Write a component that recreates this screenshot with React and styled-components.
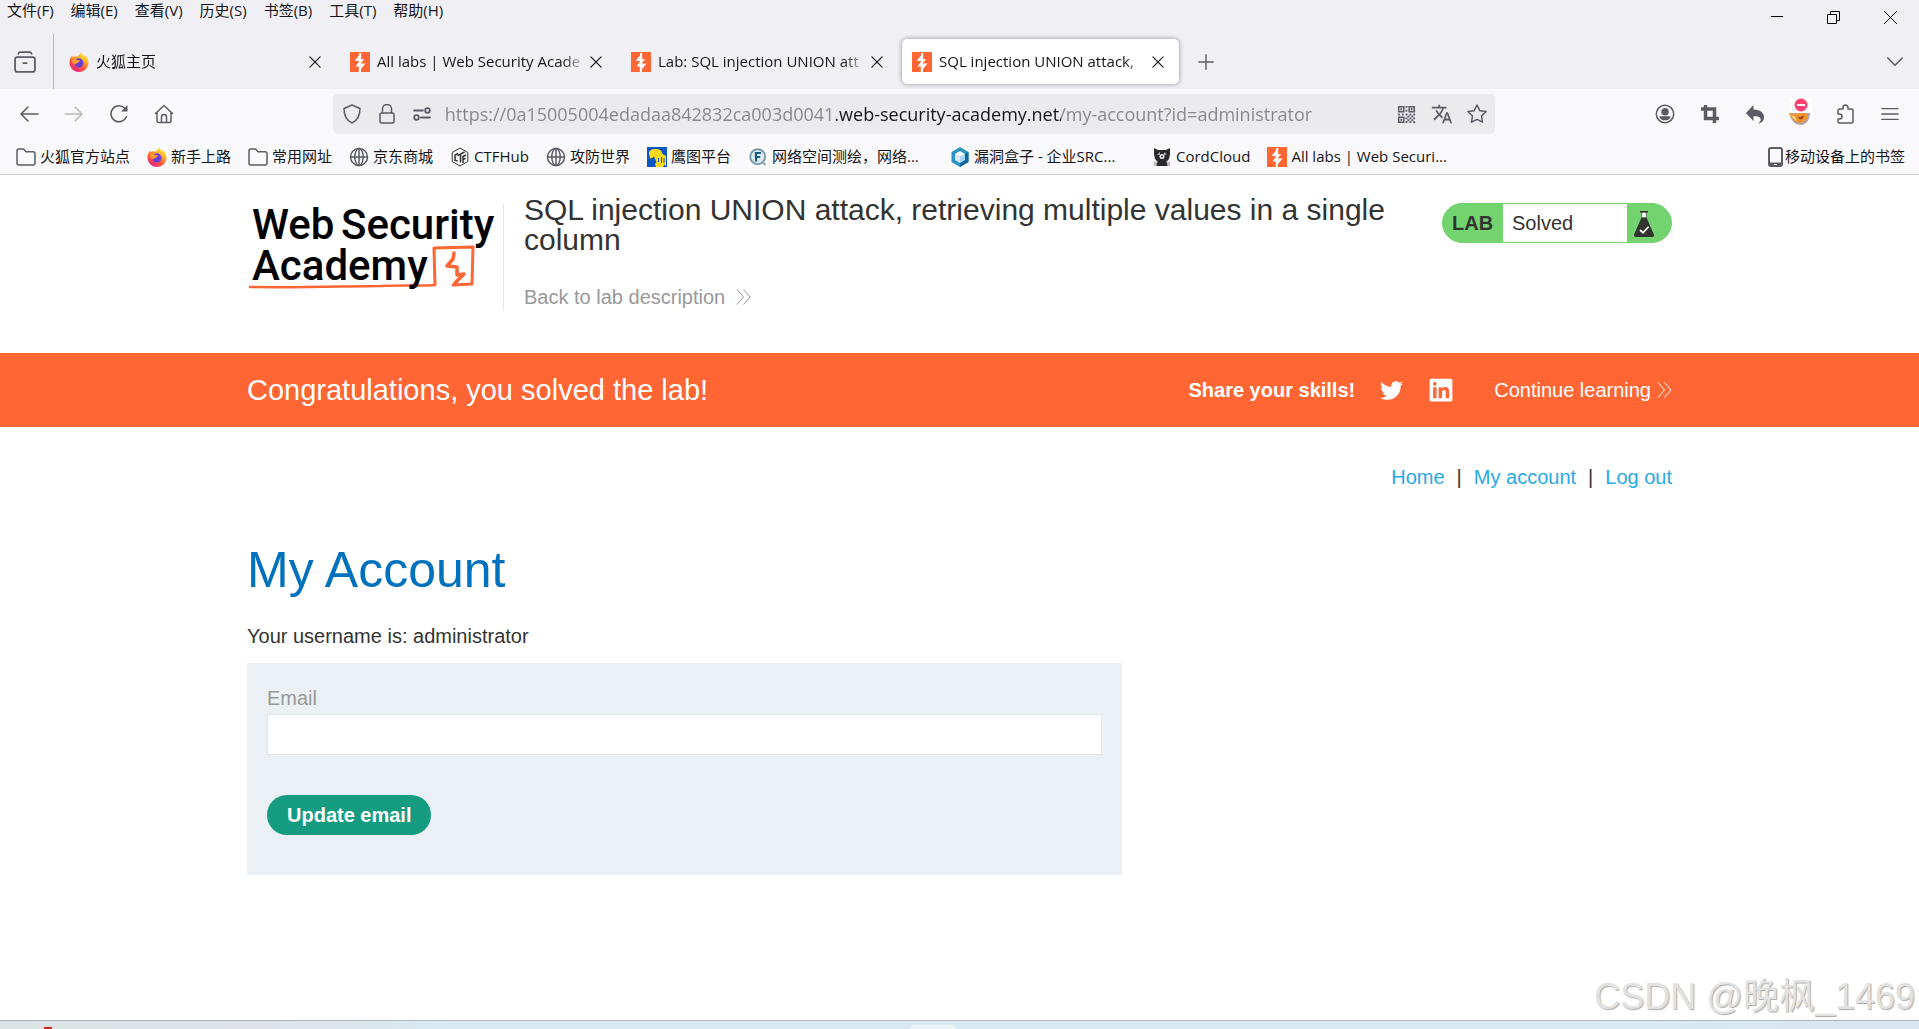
import React, { useState } from 'react'
import styled, { createGlobalStyle, css } from 'styled-components'
import { FaTwitter, FaLinkedin } from 'react-icons/fa'
import { MdTranslate } from 'react-icons/md'

const GlobalStyle = createGlobalStyle`
* {
    box-sizing: border-box;
}
body {
    margin: 0;
    background-color: #fff;
    font-family: 'Liberation Sans', Arial, sans-serif;
    font-size: 20px;
    line-height: 24px;
    color: #333332;
}
button {
    padding: 0;
    border: 0;
    background: none;
    font: inherit;
    color: inherit;
    cursor: pointer;
}
svg {
    display: block;
    flex: none;
}
`

const Screen = styled.div`
    display: flex;
    flex-direction: column;
    min-height: 100vh;
    position: relative;
`

/* browser window */

const Chrome = styled.header`
    font-family: 'Open Sans', 'Noto Sans CJK SC', sans-serif;
    font-size: 15px;
    line-height: 20px;
    color: #15141a;
    background-color: #f9f9fb;
    border-bottom: 1px solid #cccccd;
`

const TitleBar = styled.div`
    display: flex;
    justify-content: space-between;
    height: 34px;
    background-color: #f0f0f4;
`

const MenuBar = styled.nav`
    display: flex;
    align-items: flex-start;
    gap: 17px;
    padding-left: 7px;
`

const WindowControls = styled.div`
    display: flex;

    button {
        display: flex;
        align-items: center;
        justify-content: center;
        width: 57px;
    }
`

const TabStrip = styled.div`
    display: flex;
    align-items: center;
    height: 55px;
    background-color: #f0f0f4;
`

const FirefoxView = styled.button`
    display: flex;
    align-items: center;
    justify-content: center;
    width: 54px;
    height: 55px;
    padding-right: 3px;
    border-right: 1px solid #b8b8bf;
    margin-right: 5px;
`

const TabBox = styled.div`
    display: flex;
    align-items: center;
    width: 277px;
    height: 45px;
    padding: 0 12px 0 10px;
    margin-right: 4px;
    border-radius: 5px;
    ${({ $active }) =>
        $active &&
        css`
            background-color: #fff;
            box-shadow: 0 0 5px rgba(0, 0, 0, 0.4);
        `}
`

const TabTitle = styled.button`
    flex: 1;
    min-width: 0;
    padding-bottom: 2px;
    margin-left: 7px;
    overflow: hidden;
    white-space: nowrap;
    text-align: left;
    mask-image: linear-gradient(to left, transparent, #000 24px);
`

const TabClose = styled.button`
    display: flex;
    align-items: center;
    justify-content: center;
    width: 18px;
    height: 18px;
`

const IconButton = styled.button`
    display: flex;
    align-items: center;
    justify-content: center;
    width: ${({ $narrow }) => ($narrow ? 35 : 45)}px;
    height: 40px;
    color: #5b5b66;
    opacity: ${({ disabled }) => (disabled ? 0.4 : 1)};
`

const ListTabs = styled(IconButton)`
    margin-left: auto;
    margin-right: 2px;
`

const NavBar = styled.div`
    display: flex;
    align-items: center;
    height: 50px;
    padding: 0 7px 0 6px;
`

const Spring = styled.div`
    flex: 10;
`

const UrlBar = styled.div`
    display: flex;
    align-items: center;
    flex: 79;
    min-width: 0;
    height: 40px;
    padding: 0 1px 0 2px;
    border-radius: 5px;
    background-color: #ebebed;
`

/* only the registered domain is dark, the rest of the address is dimmed */
const UrlInput = styled.input`
    flex: 1;
    min-width: 0;
    height: 40px;
    padding: 0;
    margin-left: 5px;
    border: 0;
    outline: 0;
    font: inherit;
    font-size: 18px;
    -webkit-text-fill-color: transparent;
    background-image: linear-gradient(
        to right,
        #85858a 391px,
        #15141a 391px,
        #15141a 616px,
        #85858a 616px
    );
    background-clip: text;
    -webkit-background-clip: text;
`

const Bookmarks = styled.div`
    display: flex;
    align-items: center;
    gap: 17px;
    height: 35px;
    padding: 0 14px 0 16px;
`

const Bookmark = styled.a`
    display: flex;
    align-items: center;
    gap: ${({ $tight }) => ($tight ? 2 : 4)}px;
    margin-left: ${({ $last }) => ($last ? 'auto' : 0)};
    color: inherit;
    text-decoration: none;
    white-space: nowrap;

    svg {
        color: #5b5b66;
    }
    span {
        min-width: ${({ $long }) => ($long ? 161 : 0)}px;
        padding-bottom: 2px;
    }
`

/* lab page */

const Container = styled.div`
    width: calc(100% - 64px);
    max-width: 1425px;
    margin: 0 auto;
`

const LabHeader = styled(Container)`
    display: flex;
    align-items: flex-start;
    padding: 20px 0 42px;
`

const LogoLink = styled.a`
    width: 257px;
    height: 108px;
    margin-top: 8px;
    border-right: 1px solid #e4e4e4;
    flex: none;
`

const TitleBlock = styled.div`
    flex: 1;
    padding: 0 30px 0 20px;

    h2 {
        margin: 0 0 30px;
        font-size: 30px;
        font-weight: 400;
        line-height: 30px;
    }
`

const BackLink = styled.a`
    display: inline-flex;
    align-items: center;
    gap: 11px;
    color: #999;
    text-decoration: none;
`

const LabStatus = styled.div`
    display: flex;
    align-items: stretch;
    width: 230px;
    height: 40px;
    margin-top: 8px;
    border: 1px solid #72d36f;
    border-radius: 20px;
    background-color: #72d36f;
    overflow: hidden;
    line-height: 38px;

    strong {
        width: 60px;
        padding-left: 9px;
    }
    p {
        flex: 1;
        margin: 0;
        padding-left: 9px;
        background-color: #fff;
    }
    svg {
        margin: 7px 17px 0 7px;
    }
`

const Banner = styled.section`
    background-color: #ff6633;
    color: #fff;
`

const BannerRow = styled(Container)`
    display: flex;
    align-items: center;
    height: 74px;

    h4 {
        flex: 1;
        margin: 0;
        font-size: 29px;
        font-weight: 400;
        line-height: 32px;
    }
    a {
        display: flex;
        align-items: center;
        color: inherit;
        text-decoration: none;
    }
`

const Share = styled.div`
    display: flex;
    align-items: center;
    gap: 25px;
    margin-right: 40px;
`

const ContinueLink = styled.a`
    gap: 6px;
`

const Page = styled(Container)`
    flex: 1;
    padding-top: 38px;

    h1 {
        margin: 0 0 29px;
        font-size: 50px;
        font-weight: 400;
        line-height: 50px;
        color: #0071bd;
    }
    p {
        margin: 0 0 15px;
    }
`

const PageNav = styled.nav`
    display: flex;
    justify-content: flex-end;
    gap: 12px;
    margin-bottom: 56px;

    a {
        color: #29a9e5;
        text-decoration: none;
    }
`

const LoginForm = styled.form`
    display: flex;
    flex-direction: column;
    align-items: flex-start;
    max-width: 875px;
    padding: 23px 20px 40px;
    background-color: #eaf0f3;

    label {
        margin-bottom: 4px;
        color: #999;
    }
    input {
        width: 100%;
        height: 41px;
        padding: 0 10px;
        margin-bottom: 40px;
        border: 1px solid #e3e5ea;
        background-color: #fff;
        font: inherit;
        outline: 0;
    }
`

const SubmitButton = styled.button`
    height: 40px;
    padding: 0 20px;
    border-radius: 20px;
    background-color: #159b7f;
    color: #fff;
    font-weight: 700;
`

const Taskbar = styled.footer`
    display: flex;
    align-items: flex-end;
    height: 9px;
    border-top: 1px solid #abb5ba;
    background: linear-gradient(to right, #dce3e4, #dfe3e9 14%, #d7eaf2 24%, #d7eaf2 80%, #dae6f2);

    i {
        width: 8px;
        height: 2px;
        margin-left: 44px;
        background-color: #cf2a1c;
    }
    b {
        width: 46px;
        height: 4px;
        margin-left: 858px;
        border-radius: 4px 4px 0 0;
        background-color: #edf5f9;
    }
`

const Watermark = styled.div`
    position: absolute;
    right: 4px;
    bottom: 12px;
    font-family: 'Liberation Sans', 'Noto Sans CJK SC', sans-serif;
    font-size: 36px;
    line-height: 40px;
    color: #e2e2e2;
    text-shadow: 1px 1px 1px #aaa;
`

/* icons */

const Line = ({ size = 20, width = 1.5, children, ...rest }) => (
    <svg
        width={size}
        height={size}
        viewBox="0 0 20 20"
        fill="none"
        stroke="currentColor"
        strokeWidth={width}
        strokeLinecap="round"
        strokeLinejoin="round"
        aria-hidden="true"
        {...rest}
    >
        {children}
    </svg>
)

const Cross = ({ size = 12 }) => (
    <Line size={size} width={2}>
        <path d="M1.500 1.500l17 17M18.500 1.500l-17 17" />
    </Line>
)

const Bolt = () => (
    <svg width="20" height="20" viewBox="0 0 20 20" aria-hidden="true">
        <path fill="#ff6633" d="M0 0h20v20H0z" />
        <path fill="#fff" d="M9 1h2.200v6.200h3L10.800 11H9.500V9H4.500L9 3.500z" />
        <path fill="#fff" d="M9.500 9h1.300v2.500h4.700L11 17v3H8.800v-5.500H5.500z" />
    </svg>
)

const Firefox = () => (
    <svg width="20" height="20" viewBox="0 0 20 20" aria-hidden="true">
        <defs>
            <linearGradient id="flame" x1="0.8" y1="0" x2="0.25" y2="1">
                <stop offset="0.05" stopColor="#fff14a" />
                <stop offset="0.35" stopColor="#ffb02b" />
                <stop offset="0.65" stopColor="#ff5a35" />
                <stop offset="1" stopColor="#f0148a" />
            </linearGradient>
        </defs>
        <path
            fill="url(#flame)"
            d="M12.600 0c.2 2 1.300 3 2.800 4.200l.5-1.200c2.400 2.200 3.600 4.900 3.600 7.600 0 5.200-4.200 9.400-9.500 9.400S.5 15.800.5 10.600c0-3 1.200-5.600 2.500-7.200l.7 1.500C4.900 4.400 6.200 4 7.700 4.400 9.600 4.200 10.400 2 12.600 0z"
        />
        <circle cx="9.800" cy="11" r="4.700" fill="#6a3fd1" />
        <path fill="#ff9b2f" d="M3 7.500c2-.9 3.600-.4 5.200.5l2.900.5c-.2 1.300-1.600 1.200-2.300 2.300-.5.900-2.300.5-2.500 1.800-2-.6-3.300-2.600-3.300-5.100z" />
    </svg>
)

const Folder = () => (
    <Line>
        <path d="M3 2h4.500l2.500 2.700h7a2 2 0 0 1 2 2V16a2 2 0 0 1-2 2H3a2 2 0 0 1-2-2V4a2 2 0 0 1 2-2z" />
    </Line>
)

const Globe = () => (
    <Line>
        <circle cx="10" cy="10" r="8.500" />
        <ellipse cx="10" cy="10" rx="4.200" ry="8.500" />
        <path d="M1.500 10h17M10 1.500v17" />
    </Line>
)

const CtfHub = () => (
    <svg width="20" height="20" viewBox="0 0 20 20" fill="none" stroke="#333" aria-hidden="true">
        <path d="M10 1l7.800 4.500v9L10 19l-7.800-4.500v-9z" />
        <path strokeWidth="1.500" d="M8 6.500L5 8.200v5L7.500 14M7.500 8.700l7-3.700M10.500 7.500v8M13 16V9.500l3-1.500M13 12.500l2.500-1.200" />
    </svg>
)

const Hawk = () => (
    <svg width="20" height="20" viewBox="0 0 20 20" aria-hidden="true">
        <path fill="#0b57c4" d="M0 0h20v20H0z" />
        <path fill="#ffd91a" d="M2 6c0-3 4-4.500 8-4 3 .4 5 2 5.500 5L19 9v10l-1.500-1.500L16 20H9l-1-3 1.500-2L7 9.500 5 11l-2 .5z" />
        <path stroke="#0b57c4" d="M11.500 11v4M14.500 10v6M17 11v5" />
    </svg>
)

const Fofa = () => (
    <svg width="20" height="20" viewBox="0 0 20 20" fill="none" aria-hidden="true">
        <path fill="#fff" d="M0 0h20v20H0z" />
        <circle cx="9.700" cy="9.700" r="7.500" fill="#dcebf2" stroke="#7c9aab" strokeWidth="2" />
        <path stroke="#1c5878" strokeWidth="2.200" d="M8 14.500V6h5M8 10h4.200" />
        <path stroke="#8aa6b4" strokeWidth="2" d="M14.500 15l3 3" />
    </svg>
)

const Cube = () => (
    <svg width="20" height="20" viewBox="0 0 20 20" aria-hidden="true">
        <path fill="#2b93c9" d="M10 0l8.500 5v10L10 20l-8.500-5V5z" />
        <path fill="#16669c" d="M10 20l8.500-5V5L15 7v6l-5 3z" />
        <path fill="#fff" d="M10 4l5 3-5 3-5-3z" />
        <path fill="#d7eefa" d="M5 7l5 3v6l-5-3z" />
        <path fill="#a9d9f2" d="M15 7l-5 3v6l5-3z" />
    </svg>
)

const Cat = () => (
    <svg width="20" height="20" viewBox="0 0 20 20" aria-hidden="true">
        <path fill="#2a2a2e" d="M2 1l4 2h8l4-2v6l-1 5-2.500 2.500L16 19H4l1.500-4.500L3 12 2 7z" />
        <path fill="#b9b9bd" d="M5 7.500L8 5v3zM15 7.500L12 5v3zM2 15l3.500-1-1 5H2zM18 15l-3.500-1 1 5H18z" />
        <circle cx="10" cy="9.500" r="2.500" fill="#efefef" />
        <circle cx="10" cy="9.500" r="1" fill="#2a2a2e" />
    </svg>
)

const Phone = () => (
    <svg width="15" height="20" viewBox="0 0 15 20" aria-hidden="true">
        <rect x="1" y="1" width="13" height="18" rx="2" fill="none" stroke="#5b5b66" strokeWidth="2" />
        <path fill="#5b5b66" d="M1 15.500h13V19H1z" />
        <path fill="#f9f9fb" d="M6 17h3v1H6z" />
    </svg>
)

const qrDots = [
    [11, 11], [15, 11], [13, 13], [17, 13], [11, 15], [15, 15], [13, 17], [17, 17], [9, 9],
    [9, 1], [9, 5], [1, 9], [5, 9], [13, 9], [17, 9], [9, 13], [9, 17],
]

const QrCode = () => (
    <svg width="19" height="19" viewBox="0 0 20 20" aria-hidden="true">
        <path fill="none" stroke="currentColor" strokeWidth="1.600" d="M1.800 1.800h5.400v5.400H1.800zM12.800 1.800h5.400v5.400h-5.400zM1.800 12.800h5.400v5.400H1.800z" />
        <path fill="currentColor" d="M3.500 3.500h2v2h-2zM14.500 3.500h2v2h-2zM3.500 14.500h2v2h-2z" />
        {qrDots.map(([x, y]) => (
            <rect key={`${x}-${y}`} x={x} y={y} width="2" height="2" fill="currentColor" />
        ))}
    </svg>
)

const ProxyFox = () => (
    <svg width="24" height="32" viewBox="0 0 24 32" aria-hidden="true">
        <path fill="#a8a8ad" d="M2 15h20c0 7-4 12-9.500 12S2 22 2 15z" />
        <path fill="#f3932b" d="M1 15l5 1 6-1 8 1c0 5-3 9-8 9s-9-4-11-10z" />
        <path fill="#fbe3c0" d="M3 17l3 4 3 2-2-4z" />
        <path fill="#8d4512" d="M8 18l3 1.500 5-2-1 3-3 1z" />
        <path fill="#fff" d="M2 0h22v14H2z" />
        <circle cx="13" cy="7" r="6.500" fill="#ff4070" />
        <path fill="#fff" d="M9 6h8v2H9z" />
    </svg>
)

const Chevrons = () => (
    <svg width="15" height="16" viewBox="0 0 15 16" fill="none" stroke="currentColor" aria-hidden="true">
        <path d="M1 .5L7.500 8 1 15.500M7.500.5L14 8l-6.500 7.500" />
    </svg>
)

const Flask = () => (
    <svg width="20" height="26" viewBox="0 0 20 26" aria-hidden="true">
        <path fill="#fff" stroke="#333332" strokeWidth="0.600" d="M7.700 1h4.600v6H7.700z" />
        <path fill="#333332" d="M6 0h8v1.500H6zM7.500 6.500h5L19.700 23c.7 1.600 0 3-1.700 3H2c-1.700 0-2.400-1.400-1.700-3z" />
        <path fill="none" stroke="#fff" strokeWidth="1.700" d="M6 19l3 2.700 5.500-6" />
    </svg>
)

const Logo = () => (
    <svg width="256" height="100" viewBox="0 0 256 100" role="img" aria-label="Web Security Academy">
        <g fill="none" stroke="#ff6633" strokeLinecap="round" strokeLinejoin="round">
            <path strokeWidth="2.500" d="M3 84c50 1 100-1 130-1 20-1 40 0 55-1" />
            <path strokeWidth="3" d="M188 82l-1-37 39-1-1 37-19 1" />
            <path strokeWidth="3.500" d="M207 50l-1 6-6 7 10 1v8l7-1-9 9" />
        </g>
        <g fill="#000" fontFamily="Roboto, sans-serif" fontWeight="500" fontSize="42">
            <text x="5" y="36">Web</text>
            <text x="94" y="36">Security</text>
            <text x="5" y="77">Academy</text>
        </g>
    </svg>
)

const menus = ['文件(F)', '编辑(E)', '查看(V)', '历史(S)', '书签(B)', '工具(T)', '帮助(H)']

const tabs = [
    { title: '火狐主页', icon: <Firefox /> },
    { title: 'All labs | Web Security Acade', icon: <Bolt /> },
    { title: 'Lab: SQL injection UNION att', icon: <Bolt /> },
    { title: 'SQL injection UNION attack,', icon: <Bolt /> },
]

const bookmarks = [
    { title: '火狐官方站点', icon: <Folder /> },
    { title: '新手上路', icon: <Firefox /> },
    { title: '常用网址', icon: <Folder /> },
    { title: '京东商城', icon: <Globe /> },
    { title: 'CTFHub', icon: <CtfHub /> },
    { title: '攻防世界', icon: <Globe /> },
    { title: '鹰图平台', icon: <Hawk /> },
    { title: '网络空间测绘，网络...', icon: <Fofa />, long: true },
    { title: '漏洞盒子 - 企业SRC...', icon: <Cube />, long: true },
    { title: 'CordCloud', icon: <Cat /> },
    { title: 'All labs | Web Securi...', icon: <Bolt /> },
]

const Browser = () => {
    const [active, setActive] = useState(3)
    const [url, setUrl] = useState(
        'https://0a15005004edadaa842832ca003d0041.web-security-academy.net/my-account?id=administrator'
    )

    return (
        <Chrome>
            <TitleBar>
                <MenuBar>
                    {menus.map((m) => (
                        <button key={m}>{m}</button>
                    ))}
                </MenuBar>
                <WindowControls>
                    <button aria-label="Minimize">
                        <svg width="12" height="12"><path fill="#000" d="M0 5h12v1H0z" /></svg>
                    </button>
                    <button aria-label="Restore">
                        <svg width="13" height="13" fill="none" stroke="#000">
                            <path d="M.5 3.500h9v9h-9zM3.500 3.500v-3h9v9h-3" />
                        </svg>
                    </button>
                    <button aria-label="Close">
                        <svg width="13" height="13" fill="none" stroke="#000">
                            <path d="M0 0l13 13M13 0L0 13" />
                        </svg>
                    </button>
                </WindowControls>
            </TitleBar>

            <TabStrip>
                <FirefoxView aria-label="Firefox View">
                    <Line size={22} color="#5b5b66" width={1.6}>
                        <path d="M4 2.500c.3-1 1-1.500 2-1.500h8c1 0 1.700.5 2 1.500M3 5.500h14a2 2 0 0 1 2 2V17a2 2 0 0 1-2 2H3a2 2 0 0 1-2-2V7.500a2 2 0 0 1 2-2zM8.500 11h3" />
                    </Line>
                </FirefoxView>
                {tabs.map((tab, i) => (
                    <TabBox key={tab.title} $active={i === active}>
                        {tab.icon}
                        <TabTitle onClick={() => setActive(i)}>{tab.title}</TabTitle>
                        <TabClose aria-label="Close tab">
                            <Cross />
                        </TabClose>
                    </TabBox>
                ))}
                <IconButton aria-label="New tab">
                    <Line size={16} width={1.8}>
                        <path d="M10 1v18M1 10h18" />
                    </Line>
                </IconButton>
                <ListTabs aria-label="List all tabs">
                    <Line size={16} width={2}>
                        <path d="M1 5l9 9 9-9" />
                    </Line>
                </ListTabs>
            </TabStrip>

            <NavBar>
                <IconButton aria-label="Back">
                    <Line><path d="M19 10H2M9 3l-7 7 7 7" /></Line>
                </IconButton>
                <IconButton aria-label="Forward" disabled>
                    <Line><path d="M1 10h17M11 3l7 7-7 7" /></Line>
                </IconButton>
                <IconButton aria-label="Reload">
                    <Line>
                        <path d="M17.500 12.500a8 8 0 1 1-1.500-8" />
                        <path fill="currentColor" stroke="none" d="M18.500 1v6.500h-6.500z" />
                    </Line>
                </IconButton>
                <IconButton aria-label="Home">
                    <Line>
                        <path d="M1.500 9.500L10 1.500l8.500 8M3 8.500V17a1.500 1.500 0 0 0 1.500 1.500h11A1.500 1.500 0 0 0 17 17V8.500M7.500 18v-5a2.500 2.500 0 0 1 5 0v5" />
                    </Line>
                </IconButton>
                <Spring />
                <UrlBar>
                    <IconButton $narrow aria-label="Tracking protection">
                        <Line>
                            <path d="M10 1l8 3.500C18 11 15.500 16.500 10 19 4.500 16.500 2 11 2 4.500z" />
                        </Line>
                    </IconButton>
                    <IconButton $narrow aria-label="Connection secure">
                        <Line>
                            <path d="M4.500 9h11a1.500 1.500 0 0 1 1.500 1.500v7a1.500 1.500 0 0 1-1.500 1.500h-11A1.500 1.500 0 0 1 3 17.500v-7A1.500 1.500 0 0 1 4.500 9zM5.500 9V5a4.500 4.500 0 0 1 9 0v4" />
                        </Line>
                    </IconButton>
                    <IconButton $narrow aria-label="Permissions">
                        <Line width={1.8}>
                            <path d="M2 6.500h9M9 13.500h9" />
                            <circle cx="15.500" cy="6.500" r="2.300" />
                            <circle cx="4.500" cy="13.500" r="2.300" />
                        </Line>
                    </IconButton>
                    <UrlInput
                        aria-label="Address"
                        spellCheck={false}
                        value={url}
                        onChange={(e) => setUrl(e.target.value)}
                    />
                    <IconButton $narrow aria-label="QR code"><QrCode /></IconButton>
                    <IconButton $narrow aria-label="Translate"><MdTranslate size={22} /></IconButton>
                    <IconButton $narrow aria-label="Bookmark this page">
                        <Line>
                            <path d="M10 1l2.800 5.700 6.200.9-4.500 4.400 1 6.200L10 15.300l-5.500 2.900 1-6.200L1 7.600l6.200-.9z" />
                        </Line>
                    </IconButton>
                </UrlBar>
                <Spring />
                <IconButton aria-label="Account">
                    <Line>
                        <circle cx="10" cy="10" r="8.700" />
                        <circle cx="10" cy="7.700" r="3" fill="currentColor" />
                        <path fill="currentColor" d="M5.200 13h9.600c-1 1.700-2.700 2.600-4.800 2.600S6.200 14.700 5.200 13z" />
                    </Line>
                </IconButton>
                <IconButton aria-label="Screenshot">
                    <Line width={3.5} strokeLinecap="butt" strokeLinejoin="miter">
                        <path d="M5.500 1v13.500H19M1 5h13.500v14" />
                    </Line>
                </IconButton>
                <IconButton aria-label="Undo">
                    <svg width="20" height="20" viewBox="0 0 20 20" fill="currentColor">
                        <path d="M8.500 1v4.500c7 .2 10.500 3.300 10.500 7.700 0 3.300-2 5.800-6 6.300 2.500-1.700 3-3.500 2.600-4.700-.7-1.900-3-2.500-7.100-2.500V17L1 9z" />
                    </svg>
                </IconButton>
                <IconButton aria-label="Proxy switcher"><ProxyFox /></IconButton>
                <IconButton aria-label="Extensions">
                    <Line>
                        <path d="M8 5V3.500a2.500 2.500 0 0 1 5 0V5h3.500A1.500 1.500 0 0 1 18 6.500v11a1.500 1.500 0 0 1-1.500 1.500h-12A1.500 1.500 0 0 1 3 17.500V15h1.500a2.500 2.500 0 0 0 0-5H3V6.500A1.500 1.500 0 0 1 4.500 5z" />
                    </Line>
                </IconButton>
                <IconButton aria-label="Application menu">
                    <Line size={18}><path d="M1 4h18M1 10h18M1 16h18" /></Line>
                </IconButton>
            </NavBar>

            <Bookmarks>
                {bookmarks.map((b) => (
                    <Bookmark key={b.title} href="#" $long={b.long}>
                        {b.icon}
                        <span>{b.title}</span>
                    </Bookmark>
                ))}
                <Bookmark href="#" $last $tight>
                    <Phone />
                    <span>移动设备上的书签</span>
                </Bookmark>
            </Bookmarks>
        </Chrome>
    )
}

const App = () => {
    const [email, setEmail] = useState('')

    return (
        <Screen>
            <GlobalStyle />
            <Browser />

            <LabHeader>
                <LogoLink href="#" aria-label="Web Security Academy">
                    <Logo />
                </LogoLink>
                <TitleBlock>
                    <h2>SQL injection UNION attack, retrieving multiple values in a single column</h2>
                    <BackLink href="#">
                        Back to lab description
                        <Chevrons />
                    </BackLink>
                </TitleBlock>
                <LabStatus>
                    <strong>LAB</strong>
                    <p>Solved</p>
                    <Flask />
                </LabStatus>
            </LabHeader>

            <Banner>
                <BannerRow>
                    <h4>Congratulations, you solved the lab!</h4>
                    <Share>
                        <strong>Share your skills!</strong>
                        <a href="#" aria-label="Share on Twitter">
                            <FaTwitter size={23} />
                        </a>
                        <a href="#" aria-label="Share on LinkedIn">
                            <FaLinkedin size={26} />
                        </a>
                    </Share>
                    <ContinueLink href="#">
                        Continue learning
                        <Chevrons />
                    </ContinueLink>
                </BannerRow>
            </Banner>

            <Page as="main">
                <PageNav>
                    <a href="#">Home</a>
                    <span>|</span>
                    <a href="#">My account</a>
                    <span>|</span>
                    <a href="#">Log out</a>
                </PageNav>
                <h1>My Account</h1>
                <p>Your username is: administrator</p>
                <LoginForm onSubmit={(e) => e.preventDefault()}>
                    <label htmlFor="email">Email</label>
                    <input id="email" type="email" value={email} onChange={(e) => setEmail(e.target.value)} />
                    <SubmitButton type="submit">Update email</SubmitButton>
                </LoginForm>
            </Page>

            <Watermark>CSDN @晚枫_1469</Watermark>
            <Taskbar>
                <i />
                <b />
            </Taskbar>
        </Screen>
    )
}

export default App
